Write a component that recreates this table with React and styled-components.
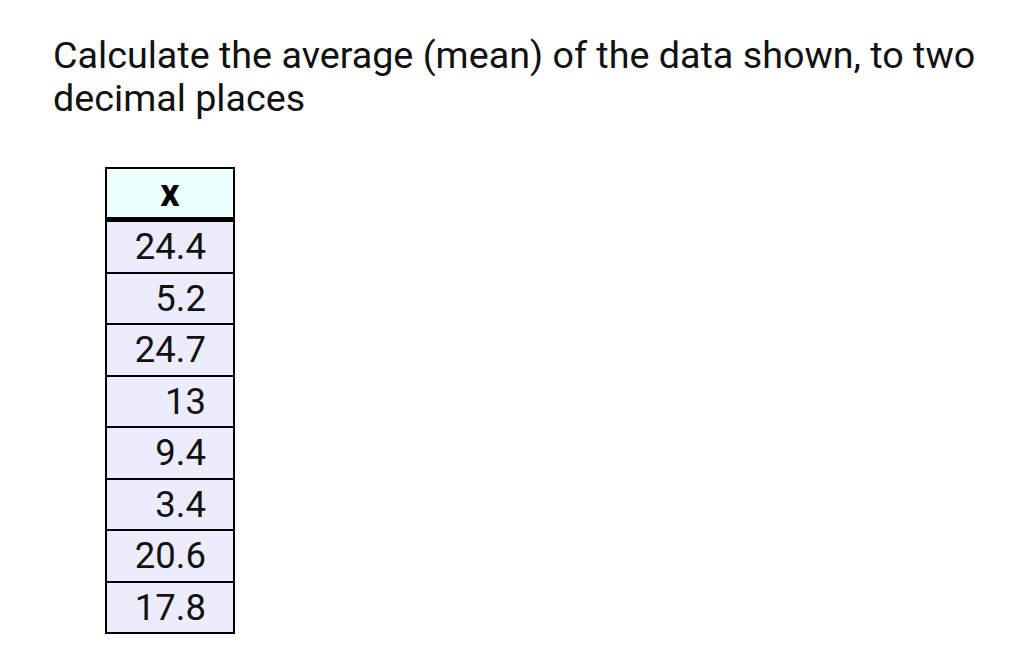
import React from "react";
import styled, { createGlobalStyle } from "styled-components";

const Global = createGlobalStyle`
  html, body { margin: 0; padding: 0; background: #ffffff; }
  body { font-family: Roboto, "Liberation Sans", sans-serif; color: #000; }
`;

const Page = styled.div`
  padding: 34px 40px 0 53px;
  display: flex;
  flex-direction: column;
  align-items: flex-start;
`;

const Question = styled.p`
  margin: 0;
  font-size: 37.7px;
  line-height: 43px;
  font-weight: 400;
  color: #111;
`;

const Table = styled.table`
  margin: 47px 0 0 52px;
  border-collapse: collapse;
  font-family: Roboto, "Liberation Sans", sans-serif;
`;

const HeadCell = styled.th`
  width: 126px;
  height: 48px;
  padding: 0;
  background: #ebffff;
  border: 2px solid #000;
  border-bottom: 5px solid #000;
  font-size: 38px;
  font-weight: 700;
  text-align: center;
`;

const Cell = styled.td`
  height: 49.5px;
  padding: 0 27px 0 0;
  background: #ececfc;
  border: 2px solid #000;
  font-size: 36.5px;
  text-align: right;
  color: #111;
`;

const values = ["24.4", "5.2", "24.7", "13", "9.4", "3.4", "20.6", "17.8"];

export default function App() {
  return (
    <>
      <Global />
      <Page>
        <Question>
          Calculate the average (mean) of the data shown, to two
          <br />
          decimal places
        </Question>
        <Table>
          <thead>
            <tr>
              <HeadCell>x</HeadCell>
            </tr>
          </thead>
          <tbody>
            {values.map((v, i) => (
              <tr key={i}>
                <Cell>{v}</Cell>
              </tr>
            ))}
          </tbody>
        </Table>
      </Page>
    </>
  );
}
